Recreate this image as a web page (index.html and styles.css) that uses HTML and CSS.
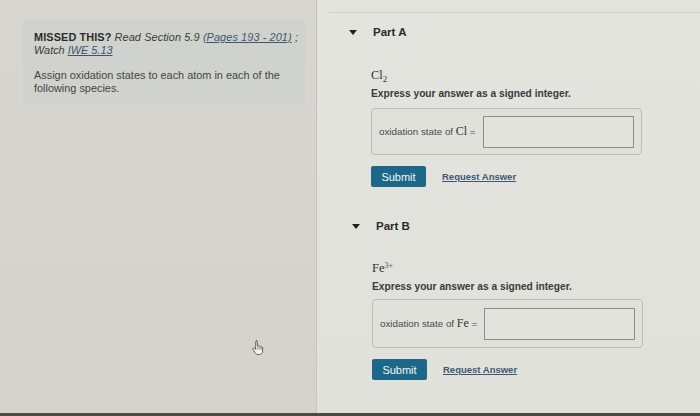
FILE: index.html
```html
<!DOCTYPE html>
<html>
<head>
<meta charset="utf-8">
<link rel="stylesheet" href="styles.css">
</head>
<body>
<div class="screen">
  <div class="main">
    <aside class="left">
      <div class="info">
        <p class="missed"><span class="line1"><b>MISSED THIS?</b> <i>Read Section 5.9 <a href="#">(Pages 193 - 201)</a> ;</i></span><br><i>Watch <a href="#">IWE 5.13</a></i></p>
        <p class="task">Assign oxidation states to each atom in each of the following species.</p>
      </div>
      <svg class="cursor" width="14" height="16" viewBox="0 0 14 16">
        <path d="M5 1.5c.8 0 1.3.5 1.3 1.3v4l.6-.2c.8-.2 1.4.1 1.6.7.7-.3 1.4 0 1.6.6.7-.2 1.4.2 1.5.9v3.5c0 1.9-1.4 3.2-3.4 3.2H7c-1.2 0-2-.5-2.7-1.5L2 10.6c-.4-.6-.2-1.300.4-1.600.6-.3 1.2 0 1.5.5l.8 1.1V2.8c0-.8.5-1.3 1.3-1.3z" fill="#f2f2ee" stroke="#555" stroke-width="0.9"/>
        <path d="M7 7.5v3M9 7.8v2.8M10.8 8.2v2.4" stroke="#555" stroke-width="0.7"/>
      </svg>
    </aside>
    <section class="right">
      <div class="topline"></div>
      <div class="part">
        <div class="part-head"><span class="tri"></span><span class="part-title">Part A</span></div>
        <div class="part-body">
          <div class="formula">Cl<sub>2</sub></div>
          <div class="express">Express your answer as a signed integer.</div>
          <div class="answer">
            <span class="label">oxidation state of <span class="chem">Cl</span> =</span>
            <span class="input"></span>
          </div>
          <div class="actions">
            <button class="submit">Submit</button>
            <a class="req" href="#">Request Answer</a>
          </div>
        </div>
      </div>
      <div class="part part-b">
        <div class="part-head"><span class="tri"></span><span class="part-title">Part B</span></div>
        <div class="part-body">
          <div class="formula">Fe<sup>3+</sup></div>
          <div class="express">Express your answer as a signed integer.</div>
          <div class="answer">
            <span class="label">oxidation state of <span class="chem">Fe</span> =</span>
            <span class="input"></span>
          </div>
          <div class="actions">
            <button class="submit">Submit</button>
            <a class="req" href="#">Request Answer</a>
          </div>
        </div>
      </div>
    </section>
  </div>
  <div class="bottom"></div>
</div>
</body>
</html>
```
FILE: styles.css
```css
html, body {
  margin: 0;
  padding: 0;
}
body {
  width: 700px;
  height: 416px;
  overflow: hidden;
  font-family: "Liberation Sans", Arial, sans-serif;
  color: #333;
}
.screen {
  width: 700px;
  height: 416px;
  display: flex;
  flex-direction: column;
  background: linear-gradient(90deg, #d6d5cf 0%, #dbdad4 45%, #e3e3de 100%);
}
.main {
  flex: 1;
  display: flex;
}
.left {
  position: relative;
  width: 317px;
  border-right: 1px solid #c4c3bd;
  padding: 20px 0 0 23px;
  box-sizing: border-box;
  background: linear-gradient(180deg, #d7d6d0 0%, #d3d2cb 100%);
}
.info {
  width: 282px;
  height: 84px;
  box-sizing: border-box;
  background: #d0d3cd;
  padding: 11px 0 0 11px;
  font-size: 10.9px;
  line-height: 12.5px;
  color: #3a3a3a;
}
.info p {
  margin: 0;
}
.line1 {
  white-space: nowrap;
  letter-spacing: 0.1px;
}
.info b {
  color: #2c2c2c;
}
.info a {
  color: #3d5670;
  text-decoration: underline;
}
.task {
  margin-top: 13px !important;
  padding-right: 8px;
  color: #444;
}
.cursor {
  position: absolute;
  left: 251px;
  top: 339px;
}
.right {
  flex: 1;
  padding-left: 12px;
  display: flex;
  flex-direction: column;
  background: linear-gradient(180deg, #e4e4df 0%, #e1e1dc 100%);
}
.topline {
  height: 1px;
  margin-top: 12px;
  background: #cfcfc9;
}
.part-head {
  display: flex;
  align-items: center;
  gap: 16px;
  margin-top: 12px;
  padding-left: 20px;
  height: 14px;
}
.tri {
  width: 0;
  height: 0;
  border-left: 4px solid transparent;
  border-right: 4px solid transparent;
  border-top: 5px solid #222;
}
.part-title {
  font-weight: bold;
  font-size: 11.5px;
  color: #2a2a2a;
}
.part-body {
  padding-left: 42px;
}
.formula {
  font-family: "Liberation Serif", "Times New Roman", serif;
  font-size: 12.5px;
  color: #333;
  margin-top: 29px;
  height: 14px;
  line-height: 14px;
}
.formula sub {
  font-size: 9px;
  vertical-align: -3px;
}
.formula sup {
  font-size: 8px;
  vertical-align: 4px;
  color: #555;
}
.express {
  font-weight: bold;
  font-size: 10.2px;
  color: #3a3a3a;
  margin-top: 6px;
}
.answer {
  margin-top: 9px;
  width: 271px;
  height: 47px;
  box-sizing: border-box;
  border: 1px solid #bdbdb8;
  border-radius: 4px;
  background: #e1e1dc;
  display: flex;
  align-items: center;
  padding: 0 7px 0 7px;
}
.label {
  font-size: 9.8px;
  color: #4a4a4a;
  width: 104px;
}
.chem {
  font-family: "Liberation Serif", "Times New Roman", serif;
  font-size: 12px;
  color: #333;
}
.input {
  flex: 1;
  height: 32px;
  box-sizing: border-box;
  border: 1px solid #8c8c88;
  background: #e3e3de;
}
.actions {
  display: flex;
  align-items: center;
  gap: 16px;
  margin-top: 11px;
}
.submit {
  width: 55px;
  height: 21px;
  border: none;
  border-radius: 2px;
  background: #1d6888;
  color: #f2f6f8;
  font-family: "Liberation Sans", Arial, sans-serif;
  font-size: 11px;
  padding: 0;
}
.req {
  font-size: 9.5px;
  font-weight: bold;
  color: #3e5874;
  text-decoration: underline;
}
.part-b .part-head {
  margin-top: 32px;
  padding-left: 23px;
}
.part-b .part-body {
  padding-left: 43px;
}
.part-b .formula {
  margin-top: 26px;
}
.part-b .express {
  margin-top: 8px;
}
.part-b .answer {
  margin-top: 7px;
  height: 49px;
}
.bottom {
  height: 3px;
  background: #4a4a46;
}
```
